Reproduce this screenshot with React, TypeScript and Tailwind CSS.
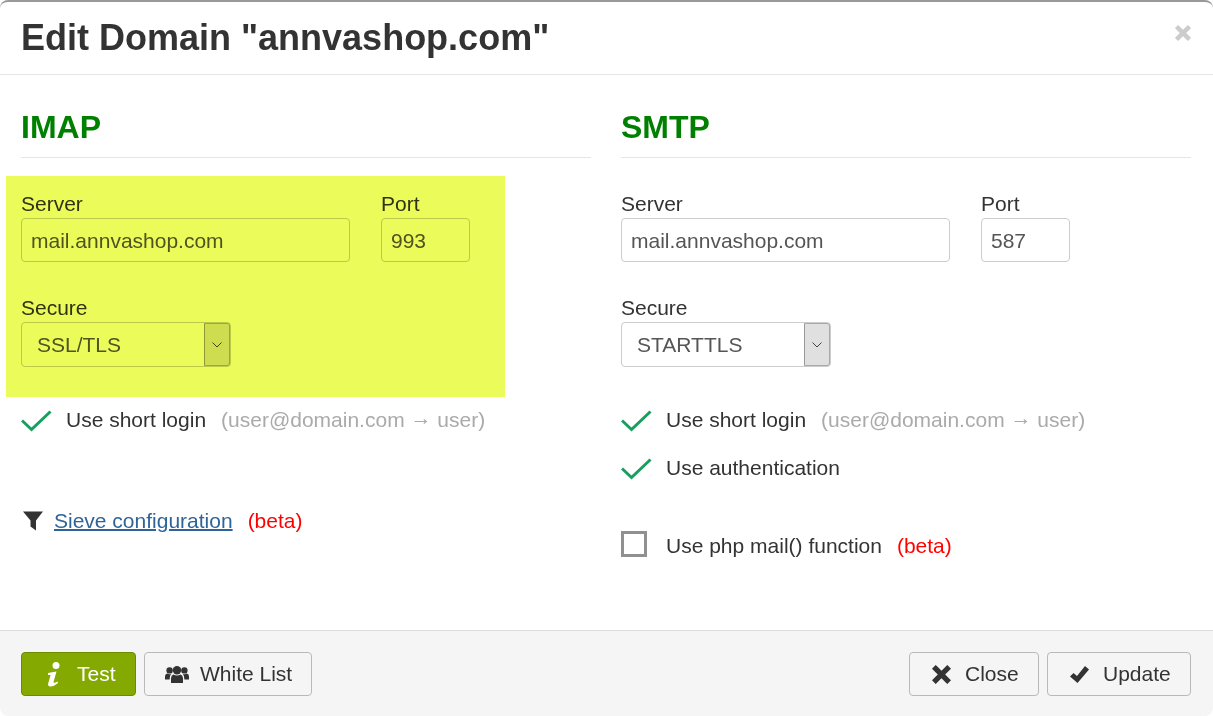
const Field = ({ label, value, width }: { label: string; value: string; width: string }) => (
  <div>
    <div className="mb-[2px] text-[21px] leading-[24px]">{label}</div>
    <input
      readOnly
      value={value}
      className={`${width} h-[44px] rounded-[4px] border border-[#ccc] bg-white px-[9px] pt-[2px] text-[21px] text-[#555] outline-none`}
    />
  </div>
);

const SelectBox = ({ value }: { value: string }) => (
  <div>
    <div className="mb-[2px] text-[21px] leading-[24px]">Secure</div>
    <div className="flex h-[45px] w-[210px] items-center rounded-[4px] border border-[#ccc] bg-white text-[#555]">
      <span className="flex-1 pl-[15px] text-[21px]">{value}</span>
      <span className="flex h-full w-[26px] items-center justify-center rounded-r-[3px] border border-[#aaa] border-l-[#999] bg-[#e0e0e0]">
        <svg width="10" height="6" viewBox="0 0 10 6" fill="none" stroke="#444" strokeWidth="1">
          <path d="M0.5 0.5 L5 5 L9.5 0.5" />
        </svg>
      </span>
    </div>
  </div>
);

const Check = () => (
  <svg width="31" height="22" viewBox="0 0 31 22" fill="none" stroke="#16a05d" strokeWidth="3" className="mt-[2px] shrink-0">
    <path d="M1 10.5 L10.5 19.5 L29.5 1.5" />
  </svg>
);

const CheckRow = ({ children }: { children: React.ReactNode }) => (
  <div className="flex h-[24px] items-center">
    <span className="flex w-[45px] shrink-0 items-center">
      <Check />
    </span>
    {children}
  </div>
);

const Hint = () => (
  <span className="ml-[15px] text-[#aaa]">
    (user@domain.com <span className="inline-block -translate-y-[2px]">→</span> user)
  </span>
);
const Beta = () => <span className="ml-[15px] text-[#f00]">(beta)</span>;

const XIcon = ({ size, className }: { size: number; className: string }) => (
  <svg width={size} height={size} viewBox="0 0 18 18" fill="none" stroke="currentColor" strokeWidth="5" strokeLinecap="square" className={className}>
    <path d="M3.5 3.5 L14.5 14.5 M14.5 3.5 L3.5 14.5" />
  </svg>
);

const UsersIcon = () => (
  <svg width="24" height="17" viewBox="0 0 24 17" fill="#333" className="mr-[11px]">
    <circle cx="12" cy="4.2" r="4.2" />
    <path d="M6 17 V12.5 Q6 9.5 8.3 8.4 Q12 10.6 15.7 8.4 Q18 9.5 18 12.5 V17 Z" />
    <circle cx="4.6" cy="4.4" r="3.2" />
    <path d="M0 13.5 V10.5 Q0 8 2.2 7.4 Q4 8.7 6.2 7.9 Q4.6 9.4 4.6 13.5 Z" />
    <circle cx="19.4" cy="4.4" r="3.2" />
    <path d="M24 13.5 V10.5 Q24 8 21.8 7.4 Q20 8.7 17.8 7.9 Q19.4 9.4 19.4 13.5 Z" />
  </svg>
);

const Column = ({
  title,
  port,
  secure,
  children,
}: {
  title: string;
  port: string;
  secure: string;
  children: React.ReactNode;
}) => (
  <div className="w-[570px]">
    <h2 className="mt-[34px] h-[49px] border-b border-[#e5e5e5] text-[32px] leading-[36px] font-bold text-[#008000]">
      {title}
    </h2>
    <div className="mt-[34px] flex gap-[31px]">
      <Field label="Server" value="mail.annvashop.com" width="w-[329px]" />
      <Field label="Port" value={port} width="w-[89px]" />
    </div>
    <div className="mt-[34px]">
      <SelectBox value={secure} />
    </div>
    <div className="mt-[41px]">{children}</div>
  </div>
);

const FooterButton = ({ children, className }: { children: React.ReactNode; className: string }) => (
  <button className={`flex h-[44px] items-center rounded-[4px] border border-[#b9b9b9] bg-[#f5f5f5] text-[21px] text-[#333] ${className}`}>
    {children}
  </button>
);

export default function App() {
  return (
    <div className="h-[716px] w-[1213px] bg-white font-['Liberation_Sans',Arial,sans-serif] text-[#333]">
      <div className="relative flex h-full flex-col overflow-hidden rounded-[8px] border-t-2 border-[#999] bg-white">
        <div className="flex h-[73px] items-center justify-between border-b border-[#e5e5e5] pr-[22px] pl-[21px]">
          <h1 className="text-[36px] leading-[40px] font-bold">Edit Domain "annvashop.com"</h1>
          <XIcon size={16} className="mb-[10px] text-[#ccc]" />
        </div>

        <div className="flex flex-1 gap-[30px] px-[21px] text-[21px]">
          <Column title="IMAP" port="993" secure="SSL/TLS">
            <CheckRow>
              Use short login
              <Hint />
            </CheckRow>
            <div className="mt-[77px] flex h-[24px] items-center">
              <svg width="20" height="20" viewBox="0 0 20 20" fill="#333" className="mr-[11px] ml-[2px] shrink-0">
                <path d="M0 0.5 H20 L13 9.5 V19.5 L7.5 15.5 V9.5 Z" />
              </svg>
              <a href="#" className="text-[#2f6499] underline decoration-[2px]">
                Sieve configuration
              </a>
              <Beta />
            </div>
          </Column>
          <Column title="SMTP" port="587" secure="STARTTLS">
            <CheckRow>
              Use short login
              <Hint />
            </CheckRow>
            <div className="mt-[24px]">
              <CheckRow>Use authentication</CheckRow>
            </div>
            <div className="mt-[54px] flex h-[24px] items-center">
              <span className="mr-[19px] mb-[4px] h-[26px] w-[26px] shrink-0 border-[3px] border-[#909090] bg-white" />
              Use php mail() function
              <Beta />
            </div>
          </Column>
        </div>

        <div className="flex h-[86px] items-start justify-between border-t border-[#ddd] bg-[#f5f5f5] pt-[21px] pr-[22px] pl-[21px]">
          <div className="flex gap-[8px]">
            <button className="flex h-[44px] w-[115px] items-center rounded-[4px] border border-[#6d8b00] bg-[#84a900] pl-[25px] text-[21px] text-white">
              <svg width="14" height="25" viewBox="0 0 14 25" fill="white" className="mr-[16px]">
                <circle cx="9" cy="3.5" r="3.5" />
                <path d="M1 11 L9.5 9.5 L6.5 20 Q6.2 21.8 10.5 19.5 L11 21 Q6 25 2.8 24.5 Q0.5 24 1.3 21 L3.6 13 L1 13 Z" />
              </svg>
              Test
            </button>
            <FooterButton className="w-[168px] pl-[20px]">
              <UsersIcon />
              White List
            </FooterButton>
          </div>
          <div className="flex gap-[8px]">
            <FooterButton className="w-[130px] pl-[22px]">
              <XIcon size={19} className="mr-[14px] text-[#333]" />
              Close
            </FooterButton>
            <FooterButton className="w-[144px] pl-[22px]">
              <svg width="19" height="17" viewBox="0 0 19 17" fill="#333" className="mr-[14px]">
                <path d="M0 10.5 L3.5 7 L7 10 L15 0 L19 3.5 L7.5 17 Z" />
              </svg>
              Update
            </FooterButton>
          </div>
        </div>

        <div className="pointer-events-none absolute top-[174px] left-[6px] h-[221px] w-[499px] bg-[#ebfb5a] mix-blend-multiply" />
      </div>
    </div>
  );
}
